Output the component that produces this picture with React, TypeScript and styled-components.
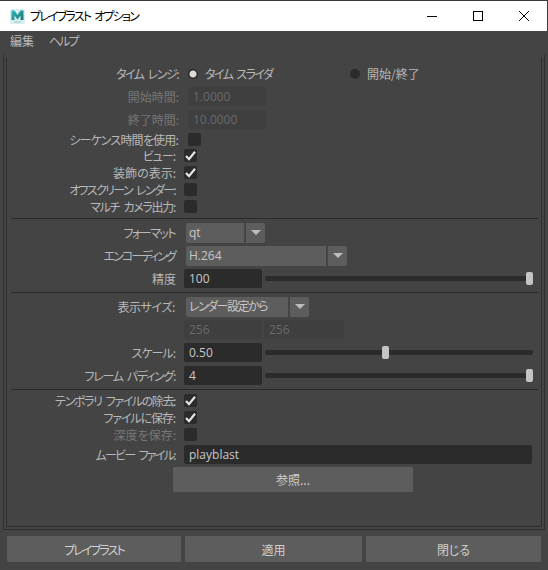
import React from 'react';
import styled, { createGlobalStyle } from 'styled-components';

const GlobalStyle = createGlobalStyle`
  html, body {
    margin: 0;
    padding: 0;
    background: #444444;
  }
  * {
    box-sizing: border-box;
  }
`;

const Window = styled.div`
  width: 548px;
  height: 570px;
  display: flex;
  flex-direction: column;
  background: #444444;
  color: #b8b8b8;
  font-family: "Noto Sans CJK JP", "Open Sans", sans-serif;
  font-size: 12px;
  font-feature-settings: "palt";
  word-spacing: 3px;
  overflow: hidden;
`;

const TitleBar = styled.div`
  height: 31px;
  flex: none;
  display: flex;
  align-items: center;
  background: #fff;
  border-top: 1px solid #3a3a3a;
  border-right: 1px solid #3a3a3a;
  color: #000;
`;

const AppIcon = styled.svg`
  width: 15px;
  height: 15px;
  margin: 0 5px 0 10px;
`;

const Title = styled.span`
  flex: 1;
  letter-spacing: -1.8px;
  margin-top: -2px;
`;

const WinButton = styled.button`
  width: 46px;
  height: 30px;
  padding: 0;
  border: 0;
  background: none;
  display: flex;
  align-items: center;
  justify-content: center;
`;

const MenuBar = styled.div`
  height: 24px;
  flex: none;
  display: flex;
  align-items: center;
  gap: 15px;
  padding-left: 10px;
  margin-top: -3px;
  margin-bottom: 3px;
`;

const MenuItem = styled.span<{ $track?: number }>`
  letter-spacing: ${(p) => p.$track ?? 0}px;
`;

const OuterFrame = styled.div`
  height: 475px;
  flex: none;
  margin: 0 3px;
  border-left: 1px solid #2e2e2e;
  border-right: 1px solid #2e2e2e;
  border-bottom: 1px solid #2e2e2e;
  padding: 3px 2px 2px;
  display: flex;
`;

const InnerFrame = styled.div`
  flex: 1;
  border-left: 1px solid #2e2e2e;
  border-right: 1px solid #2e2e2e;
  border-bottom: 1px solid #2e2e2e;
  padding: 4px 3px 0 4px;
`;

const Row = styled.div<{ $h?: number }>`
  height: ${(p) => p.$h ?? 23}px;
  display: flex;
  align-items: center;
`;

const Label = styled.label<{ $w?: number; $disabled?: boolean; $track?: number }>`
  width: ${(p) => p.$w ?? 165}px;
  flex: none;
  text-align: right;
  white-space: nowrap;
  padding-right: ${(p) => (p.$track ? 1 : 0)}px;
  letter-spacing: ${(p) => p.$track ?? 0}px;
  color: ${(p) => (p.$disabled ? '#767676' : '#b8b8b8')};
`;

const Separator = styled.div<{ $top?: number }>`
  height: 1px;
  margin: ${(p) => p.$top ?? 2}px 0 2px;
  background: #2b2b2b;
`;

const RadioDot = styled.span<{ $on?: boolean; $gap: number }>`
  width: 10px;
  height: 10px;
  flex: none;
  border-radius: 50%;
  margin-left: ${(p) => p.$gap}px;
  background: ${(p) =>
    p.$on ? 'radial-gradient(circle, #dcdcdc 0 3px, #2b2b2b 4px)' : '#2b2b2b'};
`;

const RadioText = styled.span<{ $track?: number; $w?: number }>`
  margin-left: 7px;
  white-space: nowrap;
  letter-spacing: ${(p) => p.$track ?? 0}px;
  ${(p) => (p.$w ? `width: ${p.$w}px;` : '')}
`;

const Check = styled.span<{ $gap?: number }>`
  width: 13px;
  height: 13px;
  flex: none;
  border-radius: 2px;
  margin-left: ${(p) => p.$gap ?? 8}px;
  background: #2b2b2b;
  display: flex;
  align-items: center;
  justify-content: center;
`;

const Field = styled.div<{ $w: number; $gap?: number; $disabled?: boolean }>`
  width: ${(p) => p.$w}px;
  height: 19px;
  flex: none;
  margin-left: ${(p) => p.$gap ?? 8}px;
  padding-left: 5px;
  border-radius: 2px;
  background: ${(p) => (p.$disabled ? '#3f3f3f' : '#2b2b2b')};
  color: ${(p) => (p.$disabled ? '#696969' : '#c8c8c8')};
  font-family: "Open Sans", "Noto Sans CJK JP", sans-serif;
  line-height: 19px;
`;

const Combo = styled.div`
  display: flex;
  gap: 2px;
  margin-left: 10px;
  height: 20px;
`;

const ComboValue = styled.div<{ $w: number; $track?: number }>`
  width: ${(p) => p.$w}px;
  padding-left: 3px;
  border-radius: 2px 0 0 2px;
  background: #5d5d5d;
  color: #c8c8c8;
  line-height: 20px;
  white-space: nowrap;
  letter-spacing: ${(p) => p.$track ?? 0}px;
  font-family: "Open Sans", "Noto Sans CJK JP", sans-serif;
`;

const ComboArrow = styled.div`
  width: 19px;
  border-radius: 0 2px 2px 0;
  background: #5d5d5d;
  display: flex;
  align-items: center;
  justify-content: center;
  &::after {
    content: '';
    border-left: 5px solid transparent;
    border-right: 5px solid transparent;
    border-top: 5px solid #bdbdbd;
  }
`;

const SliderTrack = styled.div`
  position: relative;
  width: 268px;
  height: 5px;
  margin-left: 3px;
  border-radius: 2px;
  background: #2b2b2b;
`;

const SliderThumb = styled.span`
  position: absolute;
  top: -4px;
  width: 7px;
  height: 13px;
  border-radius: 2px;
  background: #c4c4c4;
`;

const ActionButton = styled.button<{ $track?: number }>`
  height: 100%;
  padding: 0;
  border: 0;
  border-radius: 1px;
  background: #5d5d5d;
  color: #d0d0d0;
  font: inherit;
  font-feature-settings: inherit;
  letter-spacing: ${(p) => p.$track ?? 0}px;
`;

const BrowseRow = styled.div`
  height: 25px;
  margin: 1px 0 0 162px;
  width: 240px;
  display: flex;
`;

const BrowseButton = styled(ActionButton)`
  flex: 1;
`;

const Footer = styled.div`
  height: 26px;
  flex: none;
  margin: 6px 7px 0;
  display: grid;
  grid-template-columns: 174px 177px 175px;
  gap: 4px;
`;

const CheckMark = () => (
  <svg width="11" height="11" viewBox="0 0 11 11">
    <path d="M1 6 L4 9.2 L10 1.8" fill="none" stroke="#e6e6e6" strokeWidth="2.2" />
  </svg>
);

const Slider = ({ pos }: { pos: number }) => (
  <SliderTrack>
    <SliderThumb style={{ left: pos }} />
  </SliderTrack>
);

const CheckRow = ({
  label,
  on,
  disabled,
  track,
}: {
  label: string;
  on?: boolean;
  disabled?: boolean;
  track?: number;
}) => (
  <Row $h={17}>
    <Label $disabled={disabled} $track={track}>{label}</Label>
    <Check>{on && <CheckMark />}</Check>
  </Row>
);

const App: React.FC = () => {
  return (
    <Window>
      <GlobalStyle />
      <TitleBar>
        <AppIcon viewBox="0 0 15 15">
          <defs>
            <linearGradient id="mayaM" x1="0" y1="0" x2="1" y2="1">
              <stop offset="0" stopColor="#37b5b5" />
              <stop offset="1" stopColor="#14757c" />
            </linearGradient>
          </defs>
          <rect x="0" y="0" width="15" height="15" rx="1.5" fill="#d9efef" />
          <path d="M1.5 11 V1.5 H4.5 L7.5 6 L10.5 1.5 H13.5 V11 H10.5 V6.5 L7.5 10.5 L4.5 6.5 V11 Z" fill="url(#mayaM)" />
          <rect x="4" y="12.3" width="7" height="1.2" fill="#a5cfd0" />
        </AppIcon>
        <Title>プレイブラスト オプション</Title>
        <WinButton>
          <svg width="10" height="10" viewBox="0 0 10 10">
            <path d="M0 5.5 H10" stroke="#000" strokeWidth="1" />
          </svg>
        </WinButton>
        <WinButton>
          <svg width="10" height="10" viewBox="0 0 10 10">
            <rect x="0.5" y="0.5" width="9" height="9" fill="none" stroke="#000" />
          </svg>
        </WinButton>
        <WinButton>
          <svg width="10" height="10" viewBox="0 0 10 10">
            <path d="M0 0 L10 10 M10 0 L0 10" stroke="#000" strokeWidth="1" />
          </svg>
        </WinButton>
      </TitleBar>
      <MenuBar>
        <MenuItem>編集</MenuItem>
        <MenuItem $track={-2}>ヘルプ</MenuItem>
      </MenuBar>
      <OuterFrame>
        <InnerFrame>
          <Row>
            <Label $w={168} $track={-1.5}>タイム レンジ:</Label>
            <RadioDot $on $gap={9} />
            <RadioText $track={-1.6} $w={67}>タイム スライダ</RadioText>
            <RadioDot $gap={78} />
            <RadioText>開始/終了</RadioText>
          </Row>
          <Row>
            <Label $w={168} $disabled>開始時間:</Label>
            <Field $w={78} $gap={9} $disabled>1.0000</Field>
          </Row>
          <Row>
            <Label $w={168} $disabled>終了時間:</Label>
            <Field $w={78} $gap={9} $disabled>10.0000</Field>
          </Row>
          <Row $h={16}>
            <Label $w={168} $track={-0.8}>シーケンス時間を使用:</Label>
            <Check $gap={9} />
          </Row>
          <CheckRow label="ビュー:" on track={-1} />
          <CheckRow label="装飾の表示:" on />
          <CheckRow label="オフスクリーン レンダー:" track={-1.65} />
          <CheckRow label="マルチ カメラ出力:" track={-1.3} />
          <Separator $top={3} />
          <Row>
            <Label $track={-1.5}>フォーマット</Label>
            <Combo>
              <ComboValue $w={58}>qt</ComboValue>
              <ComboArrow />
            </Combo>
          </Row>
          <Row>
            <Label $track={-1.9}>エンコーディング</Label>
            <Combo>
              <ComboValue $w={140}>H.264</ComboValue>
              <ComboArrow />
            </Combo>
          </Row>
          <Row>
            <Label>精度</Label>
            <Field $w={78}>100</Field>
            <Slider pos={261} />
          </Row>
          <Separator />
          <Row>
            <Label $track={-0.4}>表示サイズ:</Label>
            <Combo>
              <ComboValue $w={102} $track={-1.5}>レンダー設定から</ComboValue>
              <ComboArrow />
            </Combo>
          </Row>
          <Row>
            <Label />
            <Field $w={78} $disabled>256</Field>
            <Field $w={80} $gap={2} $disabled>256</Field>
          </Row>
          <Row>
            <Label $track={-1}>スケール:</Label>
            <Field $w={78}>0.50</Field>
            <Slider pos={117} />
          </Row>
          <Row>
            <Label $track={-1.3}>フレーム パディング:</Label>
            <Field $w={78}>4</Field>
            <Slider pos={261} />
          </Row>
          <Separator />
          <CheckRow label="テンポラリ ファイルの除去:" on track={-1.4} />
          <CheckRow label="ファイルに保存:" on track={-1.1} />
          <CheckRow label="深度を保存:" disabled />
          <Row>
            <Label $track={-1.7}>ムービー ファイル:</Label>
            <Field $w={348}>playblast</Field>
          </Row>
          <BrowseRow>
            <BrowseButton>参照...</BrowseButton>
          </BrowseRow>
        </InnerFrame>
      </OuterFrame>
      <Footer>
        <ActionButton $track={-1.9}>プレイブラスト</ActionButton>
        <ActionButton>適用</ActionButton>
        <ActionButton>閉じる</ActionButton>
      </Footer>
    </Window>
  );
};

export default App;
